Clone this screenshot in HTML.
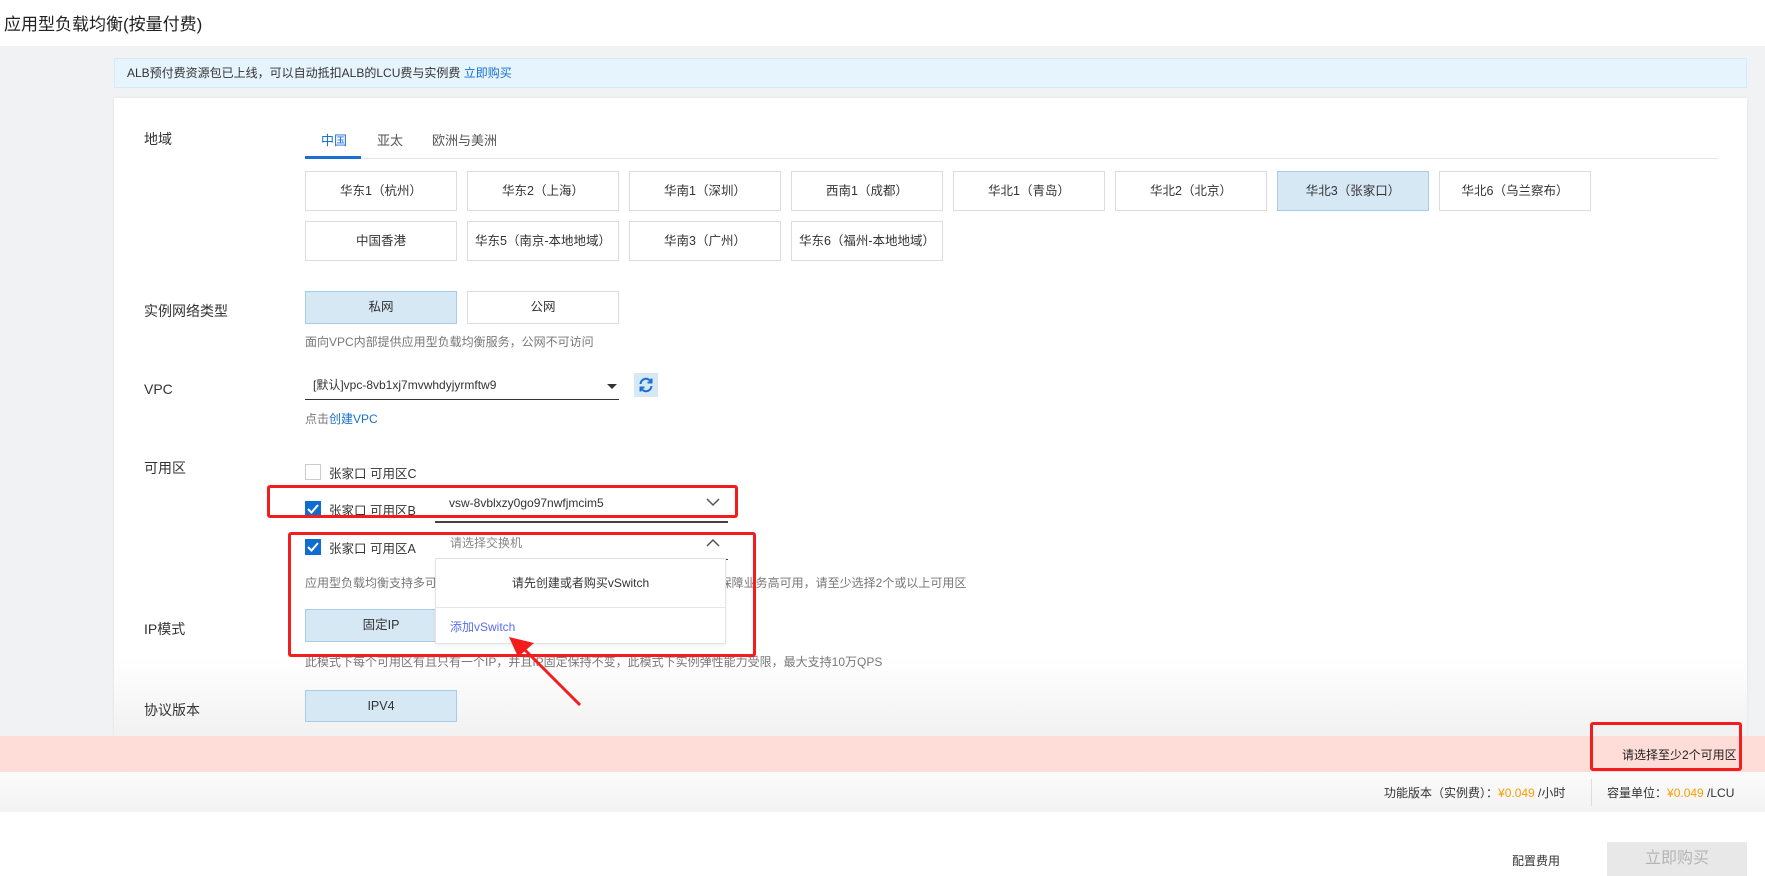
<!DOCTYPE html>
<html><head><meta charset="utf-8"><style>
*{margin:0;padding:0;box-sizing:border-box}
body{width:1765px;height:876px;position:relative;overflow:hidden;background:#fff;font-family:"Liberation Sans","Noto Sans CJK SC",sans-serif;color:#333;font-size:13px}
.a{position:absolute;white-space:nowrap}
.btn{position:absolute;height:40px;width:152px;border:1px solid #dcdcdc;background:#fff;text-align:center;line-height:38px;font-size:12.5px;color:#333}
.sel{background:#d7e8f5;border-color:#a8cbe9}
.lbl{position:absolute;font-size:14px;color:#333;white-space:nowrap}
.cb{position:absolute;width:16px;height:16px;border:1px solid #ccc;background:#fff}
.cbc{background:#0f6dd0;border-color:#0f6dd0}
.red{position:absolute;border:3px solid #f41d1d;border-radius:3px}
.gray{color:#777;font-size:12px}
</style></head><body>
<div class="a" style="left:4px;top:10px;font-size:17px;color:#222">应用型负载均衡(按量付费)</div>
<div class="a" style="left:0;top:46px;width:1765px;height:690px;background:#f1f2f4"></div>
<div class="a" style="left:114px;top:58px;width:1633px;height:30px;background:#e6f4fd;border:1px solid #d6ebf7;font-size:12px;line-height:28px;padding-left:12px;color:#333">ALB预付费资源包已上线，可以自动抵扣ALB的LCU费与实例费 <span style="color:#1a6fcf">立即购买</span></div>
<div class="a" style="left:114px;top:98px;width:1633px;height:639px;background:linear-gradient(#fff 0,#fff 560px,#f1f1f1 639px);box-shadow:0 0 3px rgba(0,0,0,.08)"></div>

<div class="lbl" style="left:144px;top:129px">地域</div>
<div class="a" style="left:321px;top:130px;font-size:13px;color:#1a6fcf">中国</div>
<div class="a" style="left:377px;top:130px;font-size:13px;color:#555">亚太</div>
<div class="a" style="left:432px;top:130px;font-size:13px;color:#555">欧洲与美洲</div>
<div class="a" style="left:305px;top:158px;width:1413px;height:1px;background:#e5e5e5"></div>
<div class="a" style="left:305px;top:156px;width:56px;height:3px;background:#1a6fcf"></div>

<div class="btn" style="left:305px;top:171px">华东1（杭州）</div>
<div class="btn" style="left:467px;top:171px">华东2（上海）</div>
<div class="btn" style="left:629px;top:171px">华南1（深圳）</div>
<div class="btn" style="left:791px;top:171px">西南1（成都）</div>
<div class="btn" style="left:953px;top:171px">华北1（青岛）</div>
<div class="btn" style="left:1115px;top:171px">华北2（北京）</div>
<div class="btn sel" style="left:1277px;top:171px">华北3（张家口）</div>
<div class="btn" style="left:1439px;top:171px">华北6（乌兰察布）</div>
<div class="btn" style="left:305px;top:221px">中国香港</div>
<div class="btn" style="left:467px;top:221px">华东5（南京-本地地域）</div>
<div class="btn" style="left:629px;top:221px">华南3（广州）</div>
<div class="btn" style="left:791px;top:221px">华东6（福州-本地地域）</div>

<div class="lbl" style="left:144px;top:301px">实例网络类型</div>
<div class="btn sel" style="left:305px;top:291px;height:33px;line-height:31px">私网</div>
<div class="btn" style="left:467px;top:291px;height:33px;line-height:31px">公网</div>
<div class="a gray" style="left:305px;top:333px">面向VPC内部提供应用型负载均衡服务，公网不可访问</div>

<div class="lbl" style="left:144px;top:381px">VPC</div>
<div class="a" style="left:305px;top:375px;width:314px;height:25px;border-bottom:1px solid #333;font-size:12px;line-height:20px;padding-left:8px;color:#333">[默认]vpc-8vb1xj7mvwhdyjyrmftw9</div>
<div class="a" style="left:607px;top:384px;width:0;height:0;border-left:5px solid transparent;border-right:5px solid transparent;border-top:5px solid #333"></div>
<div class="a" style="left:634px;top:373px;width:24px;height:24px;background:#d7e8f5"></div>
<svg class="a" style="left:637px;top:376px" width="18" height="18" viewBox="0 0 18 18" fill="none" stroke="#1a6fcf" stroke-width="2"><path d="M3.5 8A5.5 5.5 0 0 1 14 6"/><path d="M14.5 10A5.5 5.5 0 0 1 4 12"/><path d="M14.5 2.5V6.5H10.5"/><path d="M3.5 15.5V11.5H7.5"/></svg>
<div class="a gray" style="left:305px;top:410px">点击<span style="color:#1a6fcf">创建VPC</span></div>

<div class="lbl" style="left:144px;top:458px">可用区</div>
<div class="cb" style="left:305px;top:464px"></div>
<div class="a" style="left:329px;top:463px;font-size:12.5px">张家口 可用区C</div>

<div class="cb cbc" style="left:305px;top:501px"></div>
<svg class="a" style="left:305px;top:501px" width="16" height="16"><path d="M3 8l3.5 3.5L13 4" stroke="#fff" stroke-width="2" fill="none"/></svg>
<div class="a" style="left:329px;top:500px;font-size:12.5px">张家口 可用区B</div>
<div class="a" style="left:449px;top:496px;font-size:12px">vsw-8vblxzy0go97nwfjmcim5</div>
<svg class="a" style="left:706px;top:497px" width="14" height="10"><path d="M1 2l6 6 6-6" stroke="#555" stroke-width="1.5" fill="none"/></svg>
<div class="a" style="left:435px;top:521px;width:293px;height:2px;background:#444"></div>

<div class="cb cbc" style="left:305px;top:539px"></div>
<svg class="a" style="left:305px;top:539px" width="16" height="16"><path d="M3 8l3.5 3.5L13 4" stroke="#fff" stroke-width="2" fill="none"/></svg>
<div class="a" style="left:329px;top:538px;font-size:12.5px">张家口 可用区A</div>
<div class="a" style="left:450px;top:534px;font-size:12px;color:#888">请选择交换机</div>
<svg class="a" style="left:706px;top:538px" width="14" height="10"><path d="M1 8l6-6 6 6" stroke="#555" stroke-width="1.5" fill="none"/></svg>
<div class="a" style="left:435px;top:559px;width:293px;height:1px;background:#444"></div>

<div class="a gray" style="left:305px;top:574px">应用型负载均衡支持多可用区部署，如果当前地域支持2个及以上可用区，为了保障业务高可用，请至少选择2个或以上可用区</div>

<div class="lbl" style="left:144px;top:619px">IP模式</div>
<div class="btn sel" style="left:305px;top:609px;height:33px;line-height:31px">固定IP</div>
<div class="a gray" style="left:305px;top:653px">此模式下每个可用区有且只有一个IP，并且IP固定保持不变，此模式下实例弹性能力受限，最大支持10万QPS</div>

<div class="a" style="left:435px;top:558px;width:291px;height:86px;background:#fff;border:1px solid #e3e3e3;box-shadow:0 2px 4px rgba(0,0,0,.06)"></div>
<div class="a" style="left:435px;top:574px;width:291px;text-align:center;font-size:12px;color:#333">请先创建或者购买vSwitch</div>
<div class="a" style="left:436px;top:607px;width:289px;height:1px;background:#e6e6e6"></div>
<div class="a" style="left:450px;top:618px;font-size:12px;color:#5b6ef0">添加vSwitch</div>

<div class="lbl" style="left:144px;top:700px">协议版本</div>
<div class="btn sel" style="left:305px;top:690px;height:32px;line-height:30px">IPV4</div>

<div class="red" style="left:267px;top:485px;width:471px;height:33px"></div>
<div class="red" style="left:288px;top:532px;width:468px;height:125px"></div>

<svg class="a" style="left:500px;top:630px" width="90" height="80"><path d="M80 75L22 17" stroke="#f41d1d" stroke-width="3"/><polygon points="9,7 34,13 18,27" fill="#f41d1d"/></svg>

<div class="a" style="left:0;top:736px;width:1765px;height:36px;background:#fedcd8"></div>
<div class="a" style="left:1622px;top:746px;font-size:12px;color:#222">请选择至少2个可用区</div>
<div class="red" style="left:1590px;top:722px;width:152px;height:49px"></div>

<div class="a" style="left:0;top:772px;width:1765px;height:40px;background:linear-gradient(#fbfbfb,#f3f3f3)"></div>
<div class="a" style="left:1384px;top:784px;font-size:12px;color:#333">功能版本（实例费）：<span style="color:#f5a100">¥0.049</span> /小时</div>
<div class="a" style="left:1591px;top:779px;width:1px;height:27px;background:#ddd"></div>
<div class="a" style="left:1607px;top:784px;font-size:12px;color:#333">容量单位：<span style="color:#f5a100">¥0.049</span> /LCU</div>

<div class="a" style="left:1512px;top:852px;font-size:12px;color:#333">配置费用</div>
<div class="a" style="left:1607px;top:842px;width:140px;height:34px;background:#e8e8e8;color:#b5b5b5;font-size:16px;text-align:center;line-height:34px">立即购买</div>
</body></html>
